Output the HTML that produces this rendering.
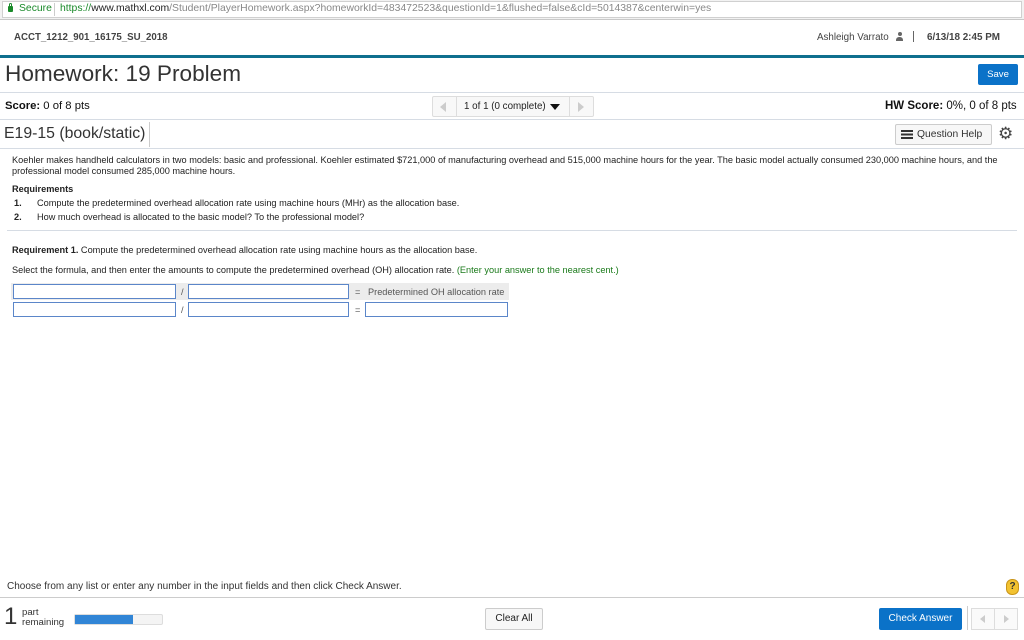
<!DOCTYPE html>
<html><head><style>
*{margin:0;padding:0;box-sizing:border-box}
body{width:1024px;height:640px;background:#fff;font-family:"Liberation Sans",Arial,sans-serif;color:#222;position:relative;overflow:hidden}
.a{position:absolute;white-space:nowrap}
.hr{position:absolute;height:1px;background:#d6dce4}
.inp{position:absolute;height:15px;border:1px solid #5b86c9;background:#fff}
.sm{font-size:9.2px}
</style></head><body>
<!-- address bar -->
<div class="a" style="left:0;top:0;width:1024px;height:20px;background:#f2f2f2;border-bottom:1px solid #c8c8c8"></div>
<div class="a" style="left:2px;top:1px;width:1020px;height:17px;background:#fff;border:1px solid #d0d0d0"></div>
<div class="a" style="left:8px;top:6px;width:5px;height:6px;background:#1a8a2a;border-radius:1px"></div>
<div class="a" style="left:9px;top:3px;width:3px;height:4px;border:1px solid #1a8a2a;border-bottom:none;border-radius:2px 2px 0 0"></div>
<div class="a" style="left:19px;top:3px;font-size:10.4px;color:#1a8a2a">Secure</div>
<div class="a" style="left:54px;top:3px;width:1px;height:13px;background:#ccc"></div>
<div class="a" style="left:60px;top:3px;font-size:10.4px;color:#888"><span style="color:#1a8a2a">https://</span><span style="color:#222">www.mathxl.com</span>/Student/PlayerHomework.aspx?homeworkId=483472523&amp;questionId=1&amp;flushed=false&amp;cId=5014387&amp;centerwin=yes</div>
<!-- course row -->
<div class="a" style="left:14px;top:32px;font-size:9.7px;font-weight:bold;color:#444">ACCT_1212_901_16175_SU_2018</div>
<div class="a" style="left:817px;top:32px;font-size:9.8px;color:#444">Ashleigh Varrato</div>
<div class="a" style="left:896px;top:32px;width:7px;height:9px;"><div style="width:4px;height:4px;border-radius:50%;background:#666;margin-left:1.5px"></div><div style="width:7px;height:4px;border-radius:3px 3px 0 0;background:#666;margin-top:1px"></div></div>
<div class="a" style="left:913px;top:31px;width:1px;height:11px;background:#666"></div>
<div class="a" style="left:927px;top:32px;font-size:9.9px;font-weight:bold;color:#444">6/13/18 2:45 PM</div>
<div class="a" style="left:0;top:55px;width:1024px;height:3px;background:#0e6f8e"></div>
<!-- title -->
<div class="a" style="left:5px;top:61px;font-size:22.6px;color:#333">Homework: 19 Problem</div>
<div class="a" style="left:978px;top:64px;width:40px;height:21px;background:#0b72c8;border-radius:2px;color:#fff;font-size:9.6px;text-align:center;line-height:21px">Save</div>
<div class="hr" style="left:0;top:92px;width:1024px"></div>
<!-- score row -->
<div class="a" style="left:5px;top:100px;font-size:11.3px;color:#111"><b>Score:</b> 0 of 8 pts</div>
<div class="a" style="left:432px;top:96px;width:162px;height:21px;border:1px solid #ddd;background:#f8f8f8;border-radius:2px"></div>
<div class="a" style="left:456px;top:96px;width:1px;height:21px;background:#ddd"></div>
<div class="a" style="left:569px;top:96px;width:1px;height:21px;background:#ddd"></div>
<div class="a" style="left:440px;top:102px;width:0;height:0;border-top:5px solid transparent;border-bottom:5px solid transparent;border-right:6px solid #ccc"></div>
<div class="a" style="left:578px;top:102px;width:0;height:0;border-top:5px solid transparent;border-bottom:5px solid transparent;border-left:6px solid #ccc"></div>
<div class="a" style="left:464px;top:101px;font-size:9.8px;color:#222">1 of 1 (0 complete)</div>
<div class="a" style="left:550px;top:104px;width:0;height:0;border-left:5px solid transparent;border-right:5px solid transparent;border-top:6px solid #111"></div>
<div class="a" style="left:885px;top:100px;font-size:11.5px;color:#111"><b>HW Score:</b> 0%, 0 of 8 pts</div>
<div class="hr" style="left:0;top:119px;width:1024px"></div>
<!-- question row -->
<div class="a" style="left:4px;top:125px;font-size:15.8px;color:#333">E19-15 (book/static)</div>
<div class="a" style="left:149px;top:122px;width:1px;height:25px;background:#ccc"></div>
<div class="a" style="left:895px;top:124px;width:97px;height:21px;border:1px solid #ccc;background:#f7f7f7;border-radius:2px"></div>
<div class="a" style="left:901px;top:130px;width:12px;height:9px;background:repeating-linear-gradient(#333 0 2px,transparent 2px 3.5px)"></div>
<div class="a" style="left:917px;top:129px;font-size:10.3px;color:#333">Question Help</div>
<div class="a" style="left:998px;top:124px;font-size:17px;color:#444;line-height:20px">⚙</div>
<div class="hr" style="left:0;top:148px;width:1024px"></div>
<!-- body text -->
<div class="a sm" style="left:12px;top:155px;color:#222">Koehler makes handheld calculators in two models: basic and professional. Koehler estimated $721,000 of manufacturing overhead and 515,000 machine hours for the year. The basic model actually consumed 230,000 machine hours, and the</div>
<div class="a sm" style="left:12px;top:166px">professional model consumed 285,000 machine hours.</div>
<div class="a sm" style="left:12px;top:184px;font-weight:bold">Requirements</div>
<div class="a sm" style="left:14px;top:198px;font-weight:bold">1.</div>
<div class="a sm" style="left:37px;top:198px">Compute the predetermined overhead allocation rate using machine hours (MHr) as the allocation base.</div>
<div class="a sm" style="left:14px;top:212px;font-weight:bold">2.</div>
<div class="a sm" style="left:37px;top:212px">How much overhead is allocated to the basic model? To the professional model?</div>
<div class="hr" style="left:7px;top:230px;width:1010px"></div>
<div class="a sm" style="left:12px;top:245px"><b>Requirement 1.</b> Compute the predetermined overhead allocation rate using machine hours as the allocation base.</div>
<div class="a sm" style="left:12px;top:265px">Select the formula, and then enter the amounts to compute the predetermined overhead (OH) allocation rate. <span style="color:#1a7a1a">(Enter your answer to the nearest cent.)</span></div>
<div class="a" style="left:11px;top:283px;width:498px;height:17px;background:#ececec"></div>
<div class="inp" style="left:13px;top:284px;width:163px"></div>
<div class="a sm" style="left:181px;top:287px;color:#555">/</div>
<div class="inp" style="left:188px;top:284px;width:161px"></div>
<div class="a sm" style="left:355px;top:287px;color:#555">=</div>
<div class="a sm" style="left:368px;top:287px;color:#555">Predetermined OH allocation rate</div>
<div class="inp" style="left:13px;top:302px;width:163px"></div>
<div class="a sm" style="left:181px;top:305px;color:#555">/</div>
<div class="inp" style="left:188px;top:302px;width:161px"></div>
<div class="a sm" style="left:355px;top:305px;color:#555">=</div>
<div class="inp" style="left:365px;top:302px;width:143px"></div>
<!-- footer -->
<div class="a" style="left:7px;top:581px;font-size:10px;color:#333">Choose from any list or enter any number in the input fields and then click Check Answer.</div>
<div class="a" style="left:1006px;top:579px;width:13px;height:16px;border-radius:6px;background:#f2c230;border:1px solid #c9951a;font-size:10px;font-weight:bold;text-align:center;line-height:14px;color:#333">?</div>
<div class="hr" style="left:0;top:597px;width:1024px;background:#ccc"></div>
<div class="a" style="left:4px;top:604px;font-size:24px;color:#333;line-height:26px">1</div>
<div class="a" style="left:22px;top:608px;font-size:9.6px;color:#333;line-height:10px">part<br>remaining</div>
<div class="a" style="left:74px;top:614px;width:89px;height:11px;border:1px solid #ddd;background:#f4f4f4;border-radius:2px"></div>
<div class="a" style="left:75px;top:615px;width:58px;height:9px;background:#3185d6"></div>
<div class="a" style="left:485px;top:608px;width:58px;height:22px;border:1px solid #ccc;background:#f7f7f7;border-radius:2px;font-size:10px;text-align:center;line-height:20px">Clear All</div>
<div class="a" style="left:879px;top:608px;width:83px;height:22px;background:#0b72c8;border-radius:2px;color:#fff;font-size:10px;text-align:center;line-height:22px">Check Answer</div>
<div class="a" style="left:967px;top:606px;width:1px;height:24px;background:#ccc"></div>
<div class="a" style="left:971px;top:608px;width:47px;height:22px;border:1px solid #ddd;background:#fafafa"></div>
<div class="a" style="left:994px;top:608px;width:1px;height:22px;background:#ddd"></div>
<div class="a" style="left:980px;top:615px;border-top:4px solid transparent;border-bottom:4px solid transparent;border-right:5px solid #ccc"></div>
<div class="a" style="left:1004px;top:615px;border-top:4px solid transparent;border-bottom:4px solid transparent;border-left:5px solid #ccc"></div>
</body></html>
